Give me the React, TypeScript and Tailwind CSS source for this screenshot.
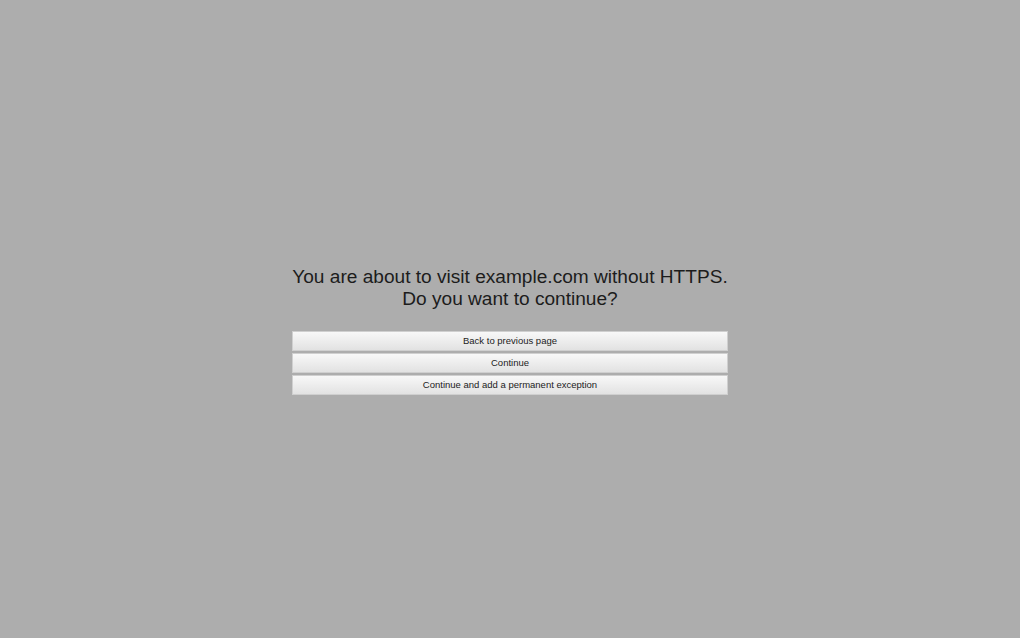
import React from 'react';

const actions = ['Back to previous page', 'Continue', 'Continue and add a permanent exception'];

export default function App() {
  return (
    <div className="min-h-[638px] w-full bg-[#adadad] pt-[266px] font-['Liberation_Sans',Arial,sans-serif]">
      <div className="mx-auto flex w-[436px] flex-col">
        <h1 className="whitespace-nowrap text-center text-[19.1px] leading-[22px] font-normal text-[#1c1c1c]">
          You are about to visit example.com without HTTPS.
          <br />
          Do you want to continue?
        </h1>
        <div className="mt-[21px] flex flex-col gap-[2px]">
          {actions.map((label) => (
            <button
              key={label}
              className="h-[20px] w-full border border-[#cfcfcf] bg-gradient-to-b from-[#f8f8f8] to-[#e2e2e2] text-[9.5px] text-[#222]"
            >
              {label}
            </button>
          ))}
        </div>
      </div>
    </div>
  );
}
